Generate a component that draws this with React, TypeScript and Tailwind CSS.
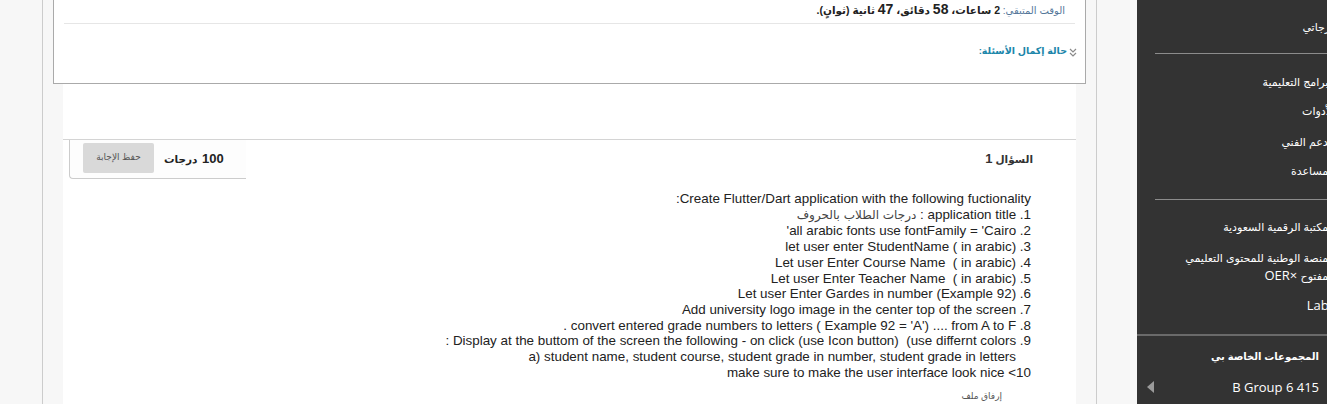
import React from "react";

const lines = [
  "Create Flutter/Dart application with the following fuctionality:",
  "1. application title : ",
  "2. all arabic fonts use fontFamily = 'Cairo'",
  "3. let user enter StudentName ( in arabic)",
  "4. Let user Enter Course Name  ( in arabic)",
  "5. Let user Enter Teacher Name  ( in arabic)",
  "6. Let user Enter Gardes in number (Example 92)",
  "7. Add university logo image in the center top of the screen",
  "8. convert entered grade numbers to letters ( Example 92 = 'A') .... from A to F .",
  "9. Display at the buttom of the screen the following - on click (use Icon button)  (use differnt colors :",
];

function SideItem({ children, bold }: any) {
  return (
    <div className={`pr-[2px] text-right text-[11px] text-white leading-[16px] whitespace-nowrap ${bold ? "font-bold" : ""}`}>
      {children}
    </div>
  );
}

export default function App() {
  return (
    <div className="w-[1327px] h-[404px] overflow-hidden" style={{ fontFamily: '"Liberation Sans", "DejaVu Sans", sans-serif' }}>
      <div className="flex w-[1337px] h-[404px]">
        {/* main */}
        <div className="w-[1137px] h-full bg-[#f7f7f7] pl-[42px]">
          <div className="w-[1055px] h-full border-x border-[#cccccc] px-[20px]">
            <div className="h-full bg-white">
              {/* timer box */}
              <div className="-mx-[10px] h-[84px] border border-t-0 border-[#aaaaaa] bg-white px-[10px]">
                <div dir="rtl" className="h-[24px] border-b border-[#e6e6e6] pr-[10px] leading-[18px] text-[#222]">
                  <span className="text-[10px] text-[#54779a]">الوقت المتبقي: </span>
                  <span className="text-[10.5px] font-bold">2 ساعات، </span>
                  <span className="text-[14px] font-bold">58</span>
                  <span className="text-[10.5px] font-bold"> دقائق، </span>
                  <span className="text-[14px] font-bold">47</span>
                  <span className="text-[10.5px] font-bold"> ثانية (ثوانٍ).</span>
                </div>
                <div dir="rtl" className="-mr-[2px] flex items-center gap-[2px] pt-[19px] leading-[16px]">
                  <svg width="8" height="9" viewBox="0 0 8 9" className="mt-[2px]">
                    <path d="M1 1 L4 4 L7 1 M1 5 L4 8 L7 5" fill="none" stroke="#8a8a8a" strokeWidth="1.2" />
                  </svg>
                  <span className="text-[9.5px] font-bold text-[#1b86aa]">حالة إكمال الأسئلة:</span>
                </div>
              </div>

              <div className="h-[56px] border-b border-[#d4d4d4]" />

              {/* question header */}
              <div className="flex justify-between items-start">
                <div className="ml-[6px] flex items-center gap-[10px] h-[39px] pl-[13px] pr-[22px] pt-[3px] pb-[6px] border-l border-b border-[#cccccc] rounded-bl-[4px] bg-[#fdfdfd]">
                  <div className="w-[71px] h-[30px] bg-[#d9d9d9] rounded-[2px] flex items-center justify-center text-[9px] text-[#555]">حفظ الإجابة</div>
                  <div dir="rtl" className="font-bold text-[#222]">
                    <span className="text-[13px]">100</span> <span className="text-[10.5px]">درجات</span>
                  </div>
                </div>
                <div dir="rtl" className="pr-[43px] pt-[9px] text-[10.5px] font-bold text-[#333]">
                  السؤال <span className="text-[13px]">1</span>
                </div>
              </div>

              {/* question text */}
              <div dir="rtl" className="mt-[12px] pr-[45px] text-[13.4px] leading-[15.7px] text-[#222] whitespace-pre">
                {lines.map((l, i) => (
                  <div key={i}>
                    {l}
                    {i === 1 && <span className="text-[12px] text-[#444]" style={{ fontFamily: '"DejaVu Sans", sans-serif' }}>درجات الطلاب بالحروف</span>}
                  </div>
                ))}
                <div className="pr-[15px]">a) student name, student course, student grade in number, student grade in letters</div>
                <div>10&gt; make sure to make the user interface look nice</div>
                <div className="mt-[9px] pr-[29px] text-[9px] text-[#555]">إرفاق ملف</div>
              </div>
            </div>
          </div>
        </div>

        {/* sidebar */}
        <div dir="rtl" className="w-[200px] h-full bg-[#333333] pt-[19px]">
          <SideItem>درجاتي</SideItem>
          <div className="ml-[18px] mt-[18px] border-b border-[#8c8c8c]" />
          <div className="mt-[20px] flex flex-col gap-[13px]">
            <SideItem>البرامج التعليمية</SideItem>
            <SideItem>الأدوات</SideItem>
            <div className="mt-[2px]"><SideItem>الدعم الفني</SideItem></div>
            <SideItem>المساعدة</SideItem>
          </div>
          <div className="ml-[18px] mt-[20px] border-b border-[#8c8c8c]" />
          <div className="mt-[19px]">
            <SideItem>المكتبة الرقمية السعودية</SideItem>
          </div>
          <div className="mt-[15px]">
            <SideItem>المنصة الوطنية للمحتوى التعليمي</SideItem>
            <div dir="ltr" className="h-[16px] pr-[2px] text-right text-white leading-[16px] whitespace-nowrap" style={{ fontFamily: '"Open Sans", "DejaVu Sans", sans-serif' }}>
              <span className="text-[13px]">OER× </span>
              <span className="text-[11px]" style={{ fontFamily: '"DejaVu Sans", sans-serif' }}>المفتوح</span>
            </div>
          </div>
          <div className="mt-[15px] pr-[2px] text-[13px] text-white leading-[16px]" style={{ fontFamily: '"Open Sans", sans-serif' }}>
            Labs
          </div>
          <div className="mt-[21px] border-b-2 border-[#6a6a6a]" />
          <div className="mt-[13px] pr-[18px] text-[10px] font-bold text-white leading-[16px]">المجموعات الخاصة بي</div>
          <div className="mt-[14px] flex items-center justify-between pr-[18px] pl-[10px]">
            <span dir="ltr" className="text-[13px] text-white leading-[16px]" style={{ fontFamily: '"Open Sans", sans-serif' }}>B Group 6 415</span>
            <svg width="7" height="12" viewBox="0 0 7 12">
              <polygon points="7,0 0,6 7,12" fill="#9a9a9a" />
            </svg>
          </div>
        </div>
      </div>
    </div>
  );
}
